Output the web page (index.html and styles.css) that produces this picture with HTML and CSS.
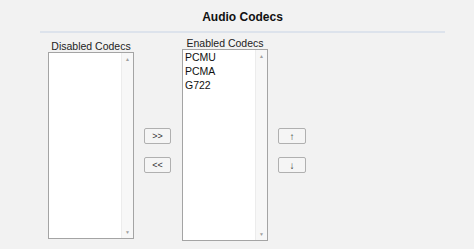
FILE: index.html
```html
<!DOCTYPE html>
<html lang="en">
<head>
	<meta charset="UTF-8">
	<title>Audio Codecs</title>
	<link rel="stylesheet" href="styles.css">
</head>
<body>
	<div class="panel">
		<h2 class="title">Audio Codecs</h2>
		<div class="codecs">
			<div class="col col-disabled">
				<div class="label">Disabled Codecs</div>
				<div class="listbox listbox-short">
					<ul class="items"></ul>
					<div class="scroll"><span class="arr">&#9650;</span><span class="arr">&#9660;</span></div>
				</div>
			</div>
			<div class="btns">
				<button class="btn">&gt;&gt;</button>
				<button class="btn">&lt;&lt;</button>
			</div>
			<div class="col">
				<div class="label">Enabled Codecs</div>
				<div class="listbox">
					<ul class="items">
						<li>PCMU</li>
						<li>PCMA</li>
						<li>G722</li>
					</ul>
					<div class="scroll"><span class="arr">&#9650;</span><span class="arr">&#9660;</span></div>
				</div>
			</div>
			<div class="btns btns-order">
				<button class="btn">&#8593;</button>
				<button class="btn">&#8595;</button>
			</div>
		</div>
	</div>
</body>
</html>
```
FILE: styles.css
```css
body{
	margin: 0;
	background-color: #f2f2f2;
	font-family: "Liberation Sans", Arial, sans-serif;
	color: #111;
}
.panel{
	margin-left: 40px;
	width: 405px;
}
.title{
	margin: 0;
	padding: 9px 0 6px;
	font-size: 12px;
	line-height: 16px;
	text-align: center;
	border-bottom: 2px solid #dde3ec;
}
.codecs{
	display: flex;
	align-items: flex-start;
	margin-left: 8px;
	padding-top: 4px;
}
.col{
	width: 86px;
}
.col-disabled{
	margin-top: 3px;
}
.label{
	font-size: 10.5px;
	line-height: 12px;
	text-align: center;
	color: #222;
}
.listbox{
	display: flex;
	background-color: #fff;
	border: 1px solid #a4a4a4;
	box-sizing: border-box;
	height: 192px;
}
.listbox-short{
	height: 187px;
}
.items{
	flex: 1;
	margin: 0;
	padding: 0 0 0 2px;
	list-style: none;
	font-size: 10.5px;
	line-height: 14px;
}
.scroll{
	width: 11px;
	display: flex;
	flex-direction: column;
	justify-content: space-between;
	align-items: center;
	padding: 3px 0;
	background-color: #f7f7f7;
	border-left: 1px solid #ececec;
}
.arr{
	font-size: 5px;
	color: #a0a0a0;
}
.btns{
	display: flex;
	flex-direction: column;
	gap: 13px;
	margin: 91px 11px 0 10px;
}
.btns-order{
	margin-right: 0;
}
.btn{
	width: 27px;
	height: 16px;
	padding: 0;
	font-family: "Liberation Sans", Arial, sans-serif;
	font-size: 9px;
	color: #333;
	background-color: #f5f5f5;
	border: 1px solid #b0b0b0;
	border-radius: 2px;
}
.btns-order .btn{
	width: 28px;
	font-size: 10px;
}
```
